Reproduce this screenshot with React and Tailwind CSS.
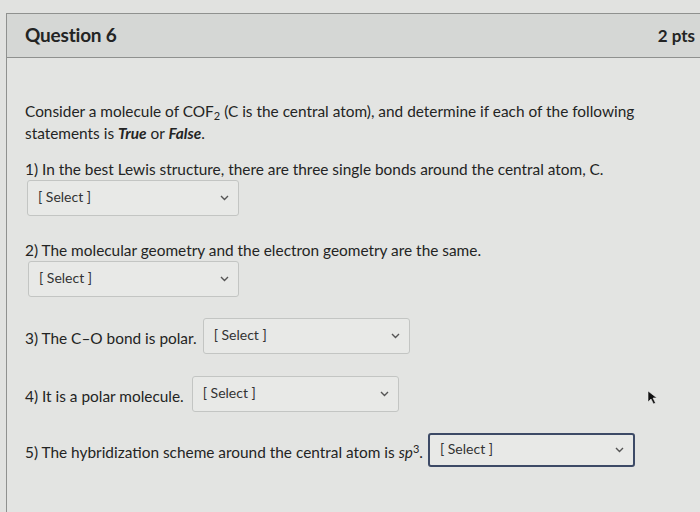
import React from "react";

function Chevron() {
  return (
    <svg width="9" height="6" viewBox="0 0 9 6" className="shrink-0">
      <path d="M1 1 L4.5 4.5 L8 1" fill="none" stroke="#555" strokeWidth="1.4" />
    </svg>
  );
}

function Select({ className = "", dark = false }) {
  return (
    <div
      className={
        "flex items-center justify-between pl-[10px] pr-[9px] bg-[#e8e9e7] rounded-[3px] " +
        (dark ? "border-2 border-[#3d4a66] h-[34px]" : "border border-[#c3c5c3] h-[36px]") +
        " " +
        className
      }
    >
      <span className="text-[14px] text-[#333] -mt-[2px]">[ Select ]</span>
      <Chevron />
    </div>
  );
}

export default function App() {
  return (
    <div
      className="relative w-[700px] h-[512px] overflow-hidden bg-[#e1e2e0] text-[#232424]"
      style={{ fontFamily: "Lato, 'Open Sans', sans-serif" }}
    >
      <div className="ml-[6px] mt-[13px] w-[710px] h-[520px] border border-[#8f918f] bg-[#e3e4e2]">
        <div className="h-[44px] flex items-center justify-between pl-[18px] pr-[20px] bg-[#d5d7d5] border-b border-[#8f918f]">
          <span className="text-[19px] font-bold tracking-[-0.2px]">Question 6</span>
          <span className="text-[17px] font-bold">2 pts</span>
        </div>
        <div className="pl-[18px] pt-[42px] text-[15.4px] leading-[22px]">
          <p className="w-[640px]">
            Consider a molecule of COF<sub className="text-[11px] leading-none">2</sub> (C is the central atom), and
            determine if each of the following statements is <span className="italic font-bold">True</span> or{" "}
            <span className="italic font-bold">False</span>.
          </p>
          <p className="mt-[14px]">1) In the best Lewis structure, there are three single bonds around the central atom, C.</p>
          <Select className="w-[212px] ml-[2px]" />
          <p className="mt-[23px]">2) The molecular geometry and the electron geometry are the same.</p>
          <Select className="w-[211px] ml-[3px]" />
          <div className="mt-[21px] flex items-center gap-[6px]">
            <span className="mt-[4px]">3) The C–O bond is polar.</span>
            <Select className="w-[207px]" />
          </div>
          <div className="mt-[22px] flex items-center gap-[8px]">
            <span className="mt-[4px]">4) It is a polar molecule.</span>
            <Select className="w-[207px]" />
          </div>
          <div className="mt-[21px] flex items-center gap-[5px]">
            <span className="mt-[4px]">
              5) The hybridization scheme around the central atom is <span className="italic">sp</span>
              <sup className="text-[11px] leading-none">3</sup>.
            </span>
            <Select className="w-[207px]" dark />
          </div>
        </div>
      </div>
      <svg className="absolute left-[647px] top-[390px]" width="12" height="16" viewBox="0 0 12 16">
        <path d="M1 1 L1 12 L4 9 L6.5 14 L8.5 13 L6 8 L10 8 Z" fill="#111" stroke="#eee" strokeWidth="0.6" />
      </svg>
    </div>
  );
}
